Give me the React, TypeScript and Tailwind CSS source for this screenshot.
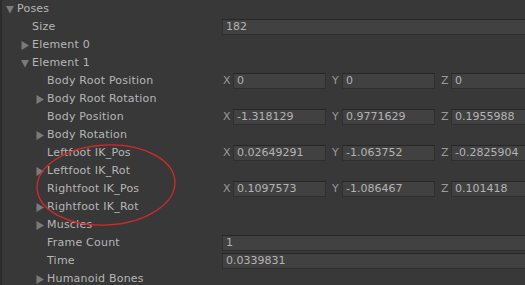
import type {ReactNode} from 'react';

type Arrow = 'down' | 'right' | null;

function Triangle({dir}: {dir: Arrow}) {
  if (!dir) return <span className="w-[12px] shrink-0" />;
  return (
    <span className="flex w-[12px] shrink-0 items-center">
      <svg width="9" height="9" viewBox="0 0 9 9" className="ml-[1px]">
        {dir === 'down' ? (
          <polygon points="0,1 8,1 4,8.5" fill="#7a7a7a" />
        ) : (
          <polygon points="0.5,0 8,4.5 0.5,9" fill="#7a7a7a" />
        )}
      </svg>
    </span>
  );
}

function Field({value, className = ''}: {value: string; className?: string}) {
  return (
    <div
      className={`flex h-[16px] items-center overflow-hidden whitespace-nowrap border border-[#2f2f2f] border-t-[#262626] bg-[#414141] pl-[3px] text-[#b4b4b4] ${className}`}
    >
      {value}
    </div>
  );
}

function Vec({x, y, z}: {x: string; y: string; z: string}) {
  const parts: [string, string][] = [['X', x], ['Y', y], ['Z', z]];
  return (
    <div className="flex items-center">
      {parts.map(([k, v]) => (
        <div key={k} className="mr-[5px] flex shrink-0 items-center">
          <span className="w-[11px] pl-[1px] text-[#9a9a9a]">{k}</span>
          <Field value={v} className="w-[93px]" />
        </div>
      ))}
    </div>
  );
}

function Row({level, arrow = null, label, children}: {level: number; arrow?: Arrow; label: string; children?: ReactNode}) {
  const pad = ['pl-[5px]', 'pl-[20px]', 'pl-[35px]'][level];
  return (
    <div className="flex h-[18px] items-center">
      <div className={`flex w-[222px] shrink-0 items-center ${pad}`}>
        <Triangle dir={arrow} />
        <span className="whitespace-nowrap tracking-[0.22px]">{label}</span>
      </div>
      <div className="min-w-0 flex-1">{children}</div>
    </div>
  );
}

export default function App() {
  return (
    <div
      className="relative h-[285px] w-[525px] overflow-hidden border-l-2 border-[#2c2c2c] bg-[#383838] text-[11px] text-[#b6b6b6]"
      style={{fontFamily: '"DejaVu Sans", Verdana, sans-serif'}}
    >
      <div className="ml-[-2px] flex flex-col">
        <Row level={0} arrow="down" label="Poses" />
        <Row level={1} label="Size">
          <Field value="182" className="mr-[-4px]" />
        </Row>
        <Row level={1} arrow="right" label="Element 0" />
        <Row level={1} arrow="down" label="Element 1" />
        <Row level={2} label="Body Root Position">
          <Vec x="0" y="0" z="0" />
        </Row>
        <Row level={2} arrow="right" label="Body Root Rotation" />
        <Row level={2} label="Body Position">
          <Vec x="-1.318129" y="0.9771629" z="0.1955988" />
        </Row>
        <Row level={2} arrow="right" label="Body Rotation" />
        <Row level={2} label="Leftfoot IK_Pos">
          <Vec x="0.02649291" y="-1.063752" z="-0.2825904" />
        </Row>
        <Row level={2} arrow="right" label="Leftfoot IK_Rot" />
        <Row level={2} label="Rightfoot IK_Pos">
          <Vec x="0.1097573" y="-1.086467" z="0.101418" />
        </Row>
        <Row level={2} arrow="right" label="Rightfoot IK_Rot" />
        <Row level={2} arrow="right" label="Muscles" />
        <Row level={2} label="Frame Count">
          <Field value="1" className="mr-[-4px]" />
        </Row>
        <Row level={2} label="Time">
          <Field value="0.0339831" className="mr-[-4px]" />
        </Row>
        <Row level={2} arrow="right" label="Humanoid Bones" />
      </div>

      {/* hand-drawn annotation */}
      <svg className="pointer-events-none absolute left-0 top-0" width="525" height="285">
        <ellipse
          cx="104"
          cy="185"
          rx="69"
          ry="40"
          transform="rotate(-3 104 185)"
          fill="none"
          stroke="#d42a2a"
          strokeWidth="1.3"
        />
      </svg>
    </div>
  );
}
